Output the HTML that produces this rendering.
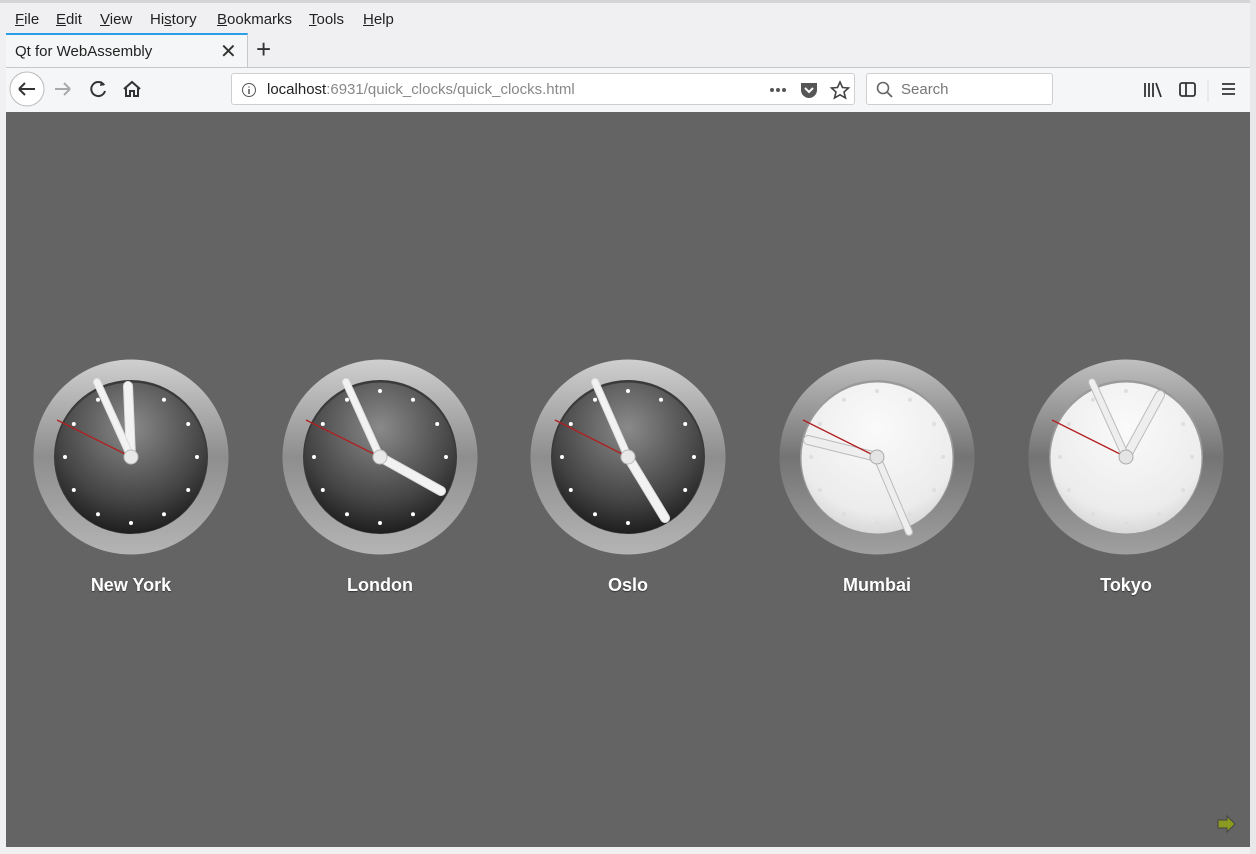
<!DOCTYPE html>
<html><head><meta charset="utf-8"><style>
*{margin:0;padding:0;box-sizing:border-box}
body{width:1256px;height:854px;background:#f0f0f2;font-family:"Liberation Sans",sans-serif;position:relative;overflow:hidden}
.menu{position:absolute;top:0;left:0;width:1256px;height:34px;border-top:3px solid #d5d5d8;}
.menu span{position:absolute;top:8px;font-size:15px;color:#222}
.tab{position:absolute;left:6px;top:33px;width:242px;height:36px;background:#f5f6f7;border-top:2px solid #2a9ee8;border-right:1px solid #c8c8cc}
.tab .t{position:absolute;left:9px;top:8px;font-size:15px;color:#222}
.tab .x{position:absolute;left:214px;top:4px;font-size:20px;color:#333}
.plus{position:absolute;left:256px;top:34px;font-size:26px;color:#333}
.nav{position:absolute;left:6px;top:67px;width:1244px;height:45px;background:#f5f6f7;border-top:1px solid #c8c8cc}
.url{position:absolute;left:231px;top:73px;width:624px;height:32px;background:#fff;border:1px solid #cfcfd2;border-radius:3px}
.url .a{position:absolute;left:35px;top:7px;font-size:15px;color:#222}
.url .a i{font-style:normal;color:#888}
.search{position:absolute;left:866px;top:73px;width:187px;height:32px;background:#fff;border:1px solid #cfcfd2;border-radius:3px}
.search span{position:absolute;left:34px;top:7px;font-size:15px;color:#777}
.content{position:absolute;left:6px;top:112px;width:1244px;height:735px;background:#646464}
.rb{position:absolute;right:0;top:0;width:6px;height:854px;background:#e8e8ea}
.lbl{position:absolute;top:575px;width:160px;text-align:center;color:#fff;font-size:18px;font-weight:bold;font-family:"Liberation Sans",sans-serif;text-shadow:0 1px 1px #333}
</style></head><body>
<div class="menu">
<span style="left:15px"><u>F</u>ile</span><span style="left:56px"><u>E</u>dit</span><span style="left:100px"><u>V</u>iew</span><span style="left:150px">Hi<u>s</u>tory</span><span style="left:217px"><u>B</u>ookmarks</span><span style="left:309px"><u>T</u>ools</span><span style="left:363px"><u>H</u>elp</span>
</div>
<div class="tab"><span class="t">Qt for WebAssembly</span><span class="x">✕</span></div>
<div class="plus">+</div>
<div class="nav"></div>
<svg style="position:absolute;left:0;top:67px" width="160" height="45">
<circle cx="27" cy="22" r="17" fill="#fff" stroke="#bbb"/>
<path d="M19 22h16M19 22l6-6M19 22l6 6" stroke="#333" stroke-width="2" fill="none"/>
<path d="M55 22h15M70 22l-6-6M70 22l-6 6" stroke="#aaa" stroke-width="2" fill="none"/>
<path d="M104 18a7 7 0 1 0 1 6" stroke="#333" stroke-width="2" fill="none"/><path d="M101 14l4 4-5 1z" fill="#333"/>
<path d="M124 22l8-7 8 7M126 20v9h4v-5h4v5h4v-9" stroke="#333" stroke-width="2" fill="none"/>
</svg>
<div class="url"><svg style="position:absolute;left:9px;top:8px" width="16" height="16"><circle cx="8" cy="8" r="6.5" stroke="#555" fill="none"/><path d="M8 7v5M8 4.5v1" stroke="#555" stroke-width="1.5"/></svg><span class="a">localhost<i>:6931/quick_clocks/quick_clocks.html</i></span>
<svg style="position:absolute;left:535px;top:6px" width="85" height="20"><circle cx="5" cy="10" r="2" fill="#555"/><circle cx="11" cy="10" r="2" fill="#555"/><circle cx="17" cy="10" r="2" fill="#555"/><path d="M34 3h16v7a8 8 0 0 1-16 0z" fill="#555"/><path d="M38 8l4 4 4-4" stroke="#fff" stroke-width="2" fill="none"/><path d="M73 2l2.5 5.5 6 .5-4.5 4 1.5 6-5.5-3.2-5.5 3.2 1.5-6-4.5-4 6-.5z" stroke="#444" stroke-width="1.6" fill="none"/></svg></div>
<div class="search"><svg style="position:absolute;left:9px;top:7px" width="18" height="18"><circle cx="7" cy="7" r="5.5" stroke="#666" stroke-width="1.6" fill="none"/><path d="M11 11l5 5" stroke="#666" stroke-width="1.8"/></svg><span>Search</span></div>
<svg style="position:absolute;left:1140px;top:78px" width="100" height="24">
<path d="M5 5v14M9 5v14M13 5v14M16 5l5 14" stroke="#333" stroke-width="1.8"/>
<rect x="40" y="5" width="15" height="13" rx="2" stroke="#333" stroke-width="1.8" fill="none"/><path d="M46 5v13" stroke="#333" stroke-width="1.8"/>
<path d="M68 2v22" stroke="#ddd"/>
<path d="M82 6h13M82 11h13M82 16h13" stroke="#333" stroke-width="1.8"/>
</svg>
<div class="content"></div>
<div class="rb"></div>
<svg id="clk" style="position:absolute;left:0;top:0" width="1256" height="854">
<defs>
<linearGradient id="ring" x1="0" y1="0" x2="0" y2="1"><stop offset="0" stop-color="#cfcfcf"/><stop offset="0.5" stop-color="#8e8e8e"/><stop offset="1" stop-color="#b4b4b4"/></linearGradient>
<linearGradient id="ringL" x1="0" y1="0" x2="0" y2="1"><stop offset="0" stop-color="#c0c0c0"/><stop offset="0.5" stop-color="#747474"/><stop offset="1" stop-color="#a0a0a0"/></linearGradient>
<radialGradient id="dark" cx="0.5" cy="0.3" r="0.7"><stop offset="0" stop-color="#8a8a8a"/><stop offset="0.7" stop-color="#444"/><stop offset="1" stop-color="#1e1e1e"/></radialGradient>
<radialGradient id="light" cx="0.5" cy="0.3" r="0.7"><stop offset="0" stop-color="#fafafa"/><stop offset="0.8" stop-color="#ececec"/><stop offset="1" stop-color="#d8d8d8"/></radialGradient>
</defs>
</svg>
<svg style="position:absolute;left:1216px;top:814px" width="22" height="20"><path d="M2 6h9V2l8 8-8 8v-4H2z" fill="#8a9a20" stroke="#444" stroke-width="1"/></svg>
<div class="lbl" style="left:51px">New York</div>
<div class="lbl" style="left:300px">London</div>
<div class="lbl" style="left:548px">Oslo</div>
<div class="lbl" style="left:797px">Mumbai</div>
<div class="lbl" style="left:1046px">Tokyo</div>
<script>
var C=[[131,0,[128,386],[97,382],[57,420]],[380,0,[441,491],[346,382],[306,420]],[628,0,[665,518],[595,382],[555,420]],[877,1,[808,440],[909,532],[803,420]],[1126,1,[1160,395],[1092,382],[1052,420]]];
var s='',cy=457;
C.forEach(function(c){var x=c[0],L=c[1];
s+='<circle cx="'+x+'" cy="'+cy+'" r="97.5" fill="url(#'+(L?'ringL':'ring')+')"/>';
s+='<circle cx="'+x+'" cy="'+cy+'" r="77" fill="'+(L?'#9a9a9a':'#3a3a3a')+'"/>';
s+='<circle cx="'+x+'" cy="'+(cy+1)+'" r="75.5" fill="url(#'+(L?'light':'dark')+')"/>';
for(var i=0;i<12;i++){var a=i*Math.PI/6;s+='<circle cx="'+(x+66*Math.sin(a)).toFixed(1)+'" cy="'+(cy-66*Math.cos(a)).toFixed(1)+'" r="2" fill="'+(L?'#dedede':'#fff')+'"/>';}
var hc=L?'#eee':'#f2f2f2',sc=L?'#bbb':'#ddd';
function hand(p,w){s+='<line x1="'+x+'" y1="'+cy+'" x2="'+p[0]+'" y2="'+p[1]+'" stroke="'+sc+'" stroke-width="'+(w+2)+'" stroke-linecap="round"/><line x1="'+x+'" y1="'+cy+'" x2="'+p[0]+'" y2="'+p[1]+'" stroke="'+hc+'" stroke-width="'+w+'" stroke-linecap="round"/>';}
hand(c[2],8);hand(c[3],6);
s+='<line x1="'+x+'" y1="'+cy+'" x2="'+c[4][0]+'" y2="'+c[4][1]+'" stroke="#b02020" stroke-width="1.3"/>';
s+='<circle cx="'+x+'" cy="'+cy+'" r="7" fill="'+(L?'#e4e4e4':'#e8e8e8')+'" stroke="'+(L?'#aaa':'#bbb')+'"/>';
});
document.getElementById('clk').insertAdjacentHTML('beforeend',s);
</script>
</body></html>
